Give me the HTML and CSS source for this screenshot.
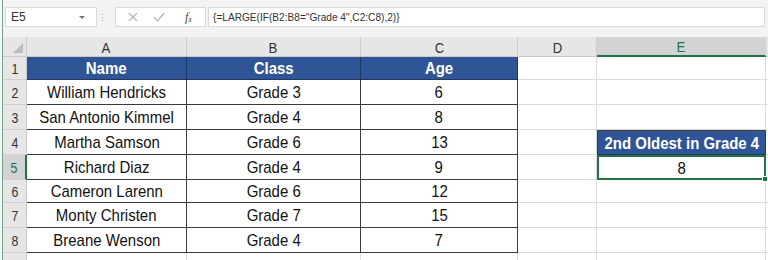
FILE: index.html
```html
<!DOCTYPE html>
<html>
<head>
<meta charset="utf-8">
<link rel="stylesheet" href="styles.css">
</head>
<body>
<div class="app">
  <div class="bar">
    <div class="namebox"><span class="ref">E5</span><span class="caret"></span></div>
    <div class="grip"><i></i><i></i><i></i></div>
    <div class="fxbox">
      <svg class="ico" width="12" height="12" viewBox="0 0 12 12"><path d="M2 2 L10 10 M10 2 L2 10" stroke="#b5b5b5" stroke-width="1.2" fill="none"/></svg>
      <svg class="ico" width="14" height="12" viewBox="0 0 14 12"><path d="M2 6.5 L5.5 10 L12 2" stroke="#b5b5b5" stroke-width="1.2" fill="none"/></svg>
      <span class="fx">f<sub>x</sub></span>
    </div>
    <div class="formula"><span class="ft">{=LARGE(IF(B2:B8="Grade 4",C2:C8),2)}</span></div>
  </div>
  <div class="sheet">
    <div class="corner"><span class="tri"></span></div>
    <div class="ch"><span class="t">A</span></div>
    <div class="ch"><span class="t">B</span></div>
    <div class="ch"><span class="t">C</span></div>
    <div class="ch"><span class="t">D</span></div>
    <div class="ch sel"><span class="t">E</span></div>
    <div class="ch last"></div>

    <div class="rh"><span class="t">1</span></div>
    <div class="c th"><span class="t">Name</span></div><div class="c th"><span class="t">Class</span></div><div class="c th"><span class="t">Age</span></div>
    <div class="c g"></div><div class="c g"></div><div class="c g last"></div>

    <div class="rh"><span class="t">2</span></div>
    <div class="c td"><span class="t">William Hendricks</span></div><div class="c td"><span class="t">Grade 3</span></div><div class="c td"><span class="t">6</span></div>
    <div class="c g"></div><div class="c g"></div><div class="c g last"></div>

    <div class="rh"><span class="t">3</span></div>
    <div class="c td"><span class="t">San Antonio Kimmel</span></div><div class="c td"><span class="t">Grade 4</span></div><div class="c td"><span class="t">8</span></div>
    <div class="c g"></div><div class="c g"></div><div class="c g last"></div>

    <div class="rh"><span class="t">4</span></div>
    <div class="c td"><span class="t">Martha Samson</span></div><div class="c td"><span class="t">Grade 6</span></div><div class="c td"><span class="t">13</span></div>
    <div class="c g"></div><div class="c th hl"><span class="t">2nd Oldest in Grade 4</span></div><div class="c g last"></div>

    <div class="rh sel"><span class="t">5</span></div>
    <div class="c td"><span class="t">Richard Diaz</span></div><div class="c td"><span class="t">Grade 4</span></div><div class="c td"><span class="t">9</span></div>
    <div class="c g"></div><div class="c g active"><span class="t">8</span><span class="handle"></span></div><div class="c g last"></div>

    <div class="rh"><span class="t">6</span></div>
    <div class="c td"><span class="t">Cameron Larenn</span></div><div class="c td"><span class="t">Grade 6</span></div><div class="c td"><span class="t">12</span></div>
    <div class="c g"></div><div class="c g"></div><div class="c g last"></div>

    <div class="rh"><span class="t">7</span></div>
    <div class="c td"><span class="t">Monty Christen</span></div><div class="c td"><span class="t">Grade 7</span></div><div class="c td"><span class="t">15</span></div>
    <div class="c g"></div><div class="c g"></div><div class="c g last"></div>

    <div class="rh"><span class="t">8</span></div>
    <div class="c td"><span class="t">Breane Wenson</span></div><div class="c td"><span class="t">Grade 4</span></div><div class="c td"><span class="t">7</span></div>
    <div class="c g"></div><div class="c g"></div><div class="c g last"></div>

    <div class="rh"></div>
    <div class="c g"></div><div class="c g"></div><div class="c g"></div>
    <div class="c g"></div><div class="c g"></div><div class="c g last"></div>
  </div>
</div>
</body>
</html>
```

FILE: styles.css
```css
* { box-sizing: border-box; }
html, body { margin: 0; padding: 0; background: #ffffff; }
body { font-family: "Liberation Sans", Arial, sans-serif; }

.app {
  width: 768px;
  height: 260px;
  overflow: hidden;
  border-left: 2px solid #f7f7f7;
}

.t {
  display: inline-block;
  transform: scaleX(0.88);
  white-space: nowrap;
}

.bar {
  height: 37px;
  background: #f3f3f3;
  display: flex;
  align-items: flex-start;
  padding-top: 7px;
  border-left: 1px solid #6fa886;
}

.namebox {
  width: 92px;
  height: 20px;
  margin-left: 2px;
  background: #fff;
  border: 1px solid #dadada;
  display: flex;
  align-items: center;
  justify-content: space-between;
  padding: 0 11px 0 5px;
  font-size: 12px;
  color: #333;
}
.caret {
  width: 0; height: 0;
  border-left: 3px solid transparent;
  border-right: 3px solid transparent;
  border-top: 3px solid #777;
}

.grip {
  width: 18px;
  height: 20px;
  display: flex;
  flex-direction: column;
  justify-content: center;
  align-items: flex-start;
  padding-left: 5px;
  gap: 2px;
}
.grip i { display: block; width: 1px; height: 1px; background: #a8a8a8; }

.fxbox {
  width: 91px;
  height: 20px;
  background: #fff;
  border: 1px solid #dadada;
  display: flex;
  align-items: center;
  padding-left: 11px;
  gap: 13px;
}
.fxbox .ico { display: block; }
.fx {
  font-family: "Liberation Serif", serif;
  font-style: italic;
  font-size: 12px;
  color: #444;
  margin-left: 6px;
}
.fx sub { font-size: 8px; vertical-align: -1px; }

.formula {
  flex: 1;
  height: 20px;
  margin-left: 2px;
  margin-right: 3px;
  background: #fff;
  border: 1px solid #dadada;
  font-size: 11.5px;
  color: #333;
  line-height: 18px;
  padding-left: 4px;
}
.ft {
  display: inline-block;
  transform: scaleX(0.88);
  transform-origin: left center;
  white-space: nowrap;
}

.sheet {
  display: grid;
  grid-template-columns: 24px 160px 174px 157px 79px 169px 1fr;
  grid-template-rows: 20px 23px 25px 25px 25px 25px 23px 25px 25px 10px;
  border-left: 1px solid #6fa886;
}

.corner {
  background: #e6e6e6;
  border-right: 1px solid #c9c9c9;
  border-bottom: 1px solid #c9c9c9;
  position: relative;
}
.tri {
  position: absolute;
  right: 3px;
  bottom: 3px;
  width: 0; height: 0;
  border-left: 10px solid transparent;
  border-bottom: 10px solid #bcbcbc;
}

.ch {
  background: #e6e6e6;
  border-right: 1px solid #cfcfcf;
  border-bottom: 1px solid #c9c9c9;
  display: flex;
  align-items: center;
  justify-content: center;
  padding-top: 1px;
  font-size: 15px;
  color: #333;
}
.ch.sel {
  background: #d3d3d3;
  color: #217346;
  border-bottom: 2px solid #217346;
}
.ch.last { border-right: none; }

.rh {
  background: #e6e6e6;
  border-right: 1px solid #c9c9c9;
  border-bottom: 1px solid #d0d0d0;
  display: flex;
  align-items: center;
  justify-content: center;
  padding-top: 2px;
  font-size: 14px;
  color: #333;
}
.rh.sel {
  background: #d3d3d3;
  color: #217346;
  border-right: 2px solid #217346;
}

.c {
  display: flex;
  align-items: center;
  justify-content: center;
  padding-top: 2px;
  font-size: 17px;
  color: #111;
  white-space: nowrap;
}
.g {
  border-right: 1px solid #dcdcdc;
  border-bottom: 1px solid #dcdcdc;
}
.g.last { border-right: none; }

.th {
  background: #2f5597;
  color: #fff;
  font-weight: bold;
  border-right: 1px solid #1f3864;
  border-bottom: 1px solid #1f3864;
}
.td {
  border-right: 1px solid #3a3a3a;
  border-bottom: 1px solid #3a3a3a;
}
.hl {
  border: 1px solid #1f3864;
  border-top: 1px solid #404040;
}

.active {
  position: relative;
  border: 2px solid #217346;
  color: #111;
}
.handle {
  position: absolute;
  right: -4px;
  bottom: -4px;
  width: 6px;
  height: 6px;
  background: #217346;
  border: 1px solid #fff;
}
```
